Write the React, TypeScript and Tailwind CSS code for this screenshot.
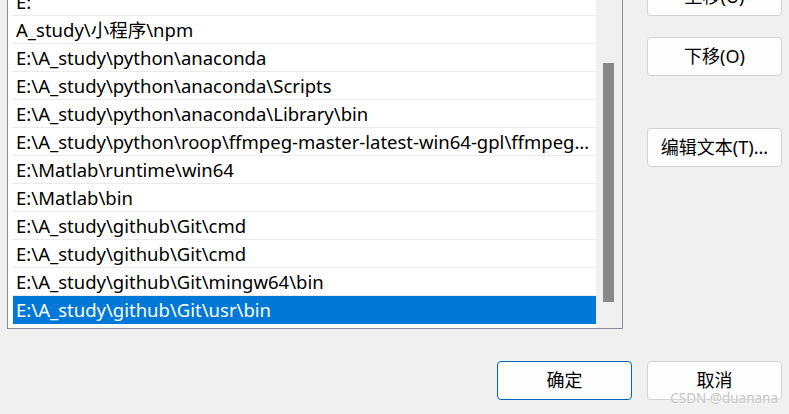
const paths = [
  'E:',
  'A_study\\小程序\\npm',
  'E:\\A_study\\python\\anaconda',
  'E:\\A_study\\python\\anaconda\\Scripts',
  'E:\\A_study\\python\\anaconda\\Library\\bin',
  'E:\\A_study\\python\\roop\\ffmpeg-master-latest-win64-gpl\\ffmpeg-master-latest-win64-gpl\\bin',
  'E:\\Matlab\\runtime\\win64',
  'E:\\Matlab\\bin',
  'E:\\A_study\\github\\Git\\cmd',
  'E:\\A_study\\github\\Git\\cmd',
  'E:\\A_study\\github\\Git\\mingw64\\bin',
  'E:\\A_study\\github\\Git\\usr\\bin',
];

const selected = 11;

function DialogButton({ label, primary = false }: { label: string; primary?: boolean }) {
  return (
    <button
      className={`w-[135px] h-[39px] rounded-[4px] border bg-[#fdfdfd] text-[18px] whitespace-nowrap text-black ${
        primary ? 'border-[#0067c0]' : 'border-[#d3d3d3]'
      }`}
    >
      {label}
    </button>
  );
}

export default function App() {
  return (
    <div
      className="relative w-[789px] h-[414px] overflow-hidden bg-[#f0f0f0] text-black"
      style={{ fontFamily: '"Noto Sans", "Noto Sans CJK SC", sans-serif' }}
    >
      {/* list + side buttons */}
      <div className="flex items-start pl-[7px] pr-[7px] gap-[24px]">
        <div className="-mt-[13px] w-[616px] shrink-0 flex border border-[#8c8c96] bg-white">
          <div className="flex-1 min-w-0 pl-[5px] pb-[4px]">
            {paths.map((p, i) => (
              <div
                key={i}
                className={`h-[28px] flex items-center px-[3px] border-b text-[18.5px] ${
                  i === selected
                    ? 'bg-[#0078d7] border-[#0078d7] text-white'
                    : 'border-[#ebebeb]'
                }`}
              >
                <span className="min-w-0 truncate">{p}</span>
              </div>
            ))}
          </div>
          <div className="w-[26px] shrink-0 bg-[#f0f0f0] pl-[7px]">
            <div className="mt-[75px] w-[11px] h-[239px] bg-[#888888]" />
          </div>
        </div>

        <div className="-mt-[23px] flex flex-col">
          <DialogButton label="上移(U)" />
          <div className="mt-[21px]">
            <DialogButton label="下移(O)" />
          </div>
          <div className="mt-[52px]">
            <DialogButton label="编辑文本(T)..." />
          </div>
        </div>
      </div>

      {/* OK / Cancel */}
      <div className="mt-[32px] flex justify-end gap-[15px] pr-[7px]">
        <DialogButton label="确定" primary />
        <DialogButton label="取消" />
      </div>

      {/* watermark */}
      <div
        className="absolute right-[11px] bottom-[9px] text-[13.5px] leading-none text-[#c4c4c4]"
        style={{ textShadow: '0 0 1px #fff, 0 0 1px #fff' }}
      >
        CSDN @duanana
      </div>
    </div>
  );
}
